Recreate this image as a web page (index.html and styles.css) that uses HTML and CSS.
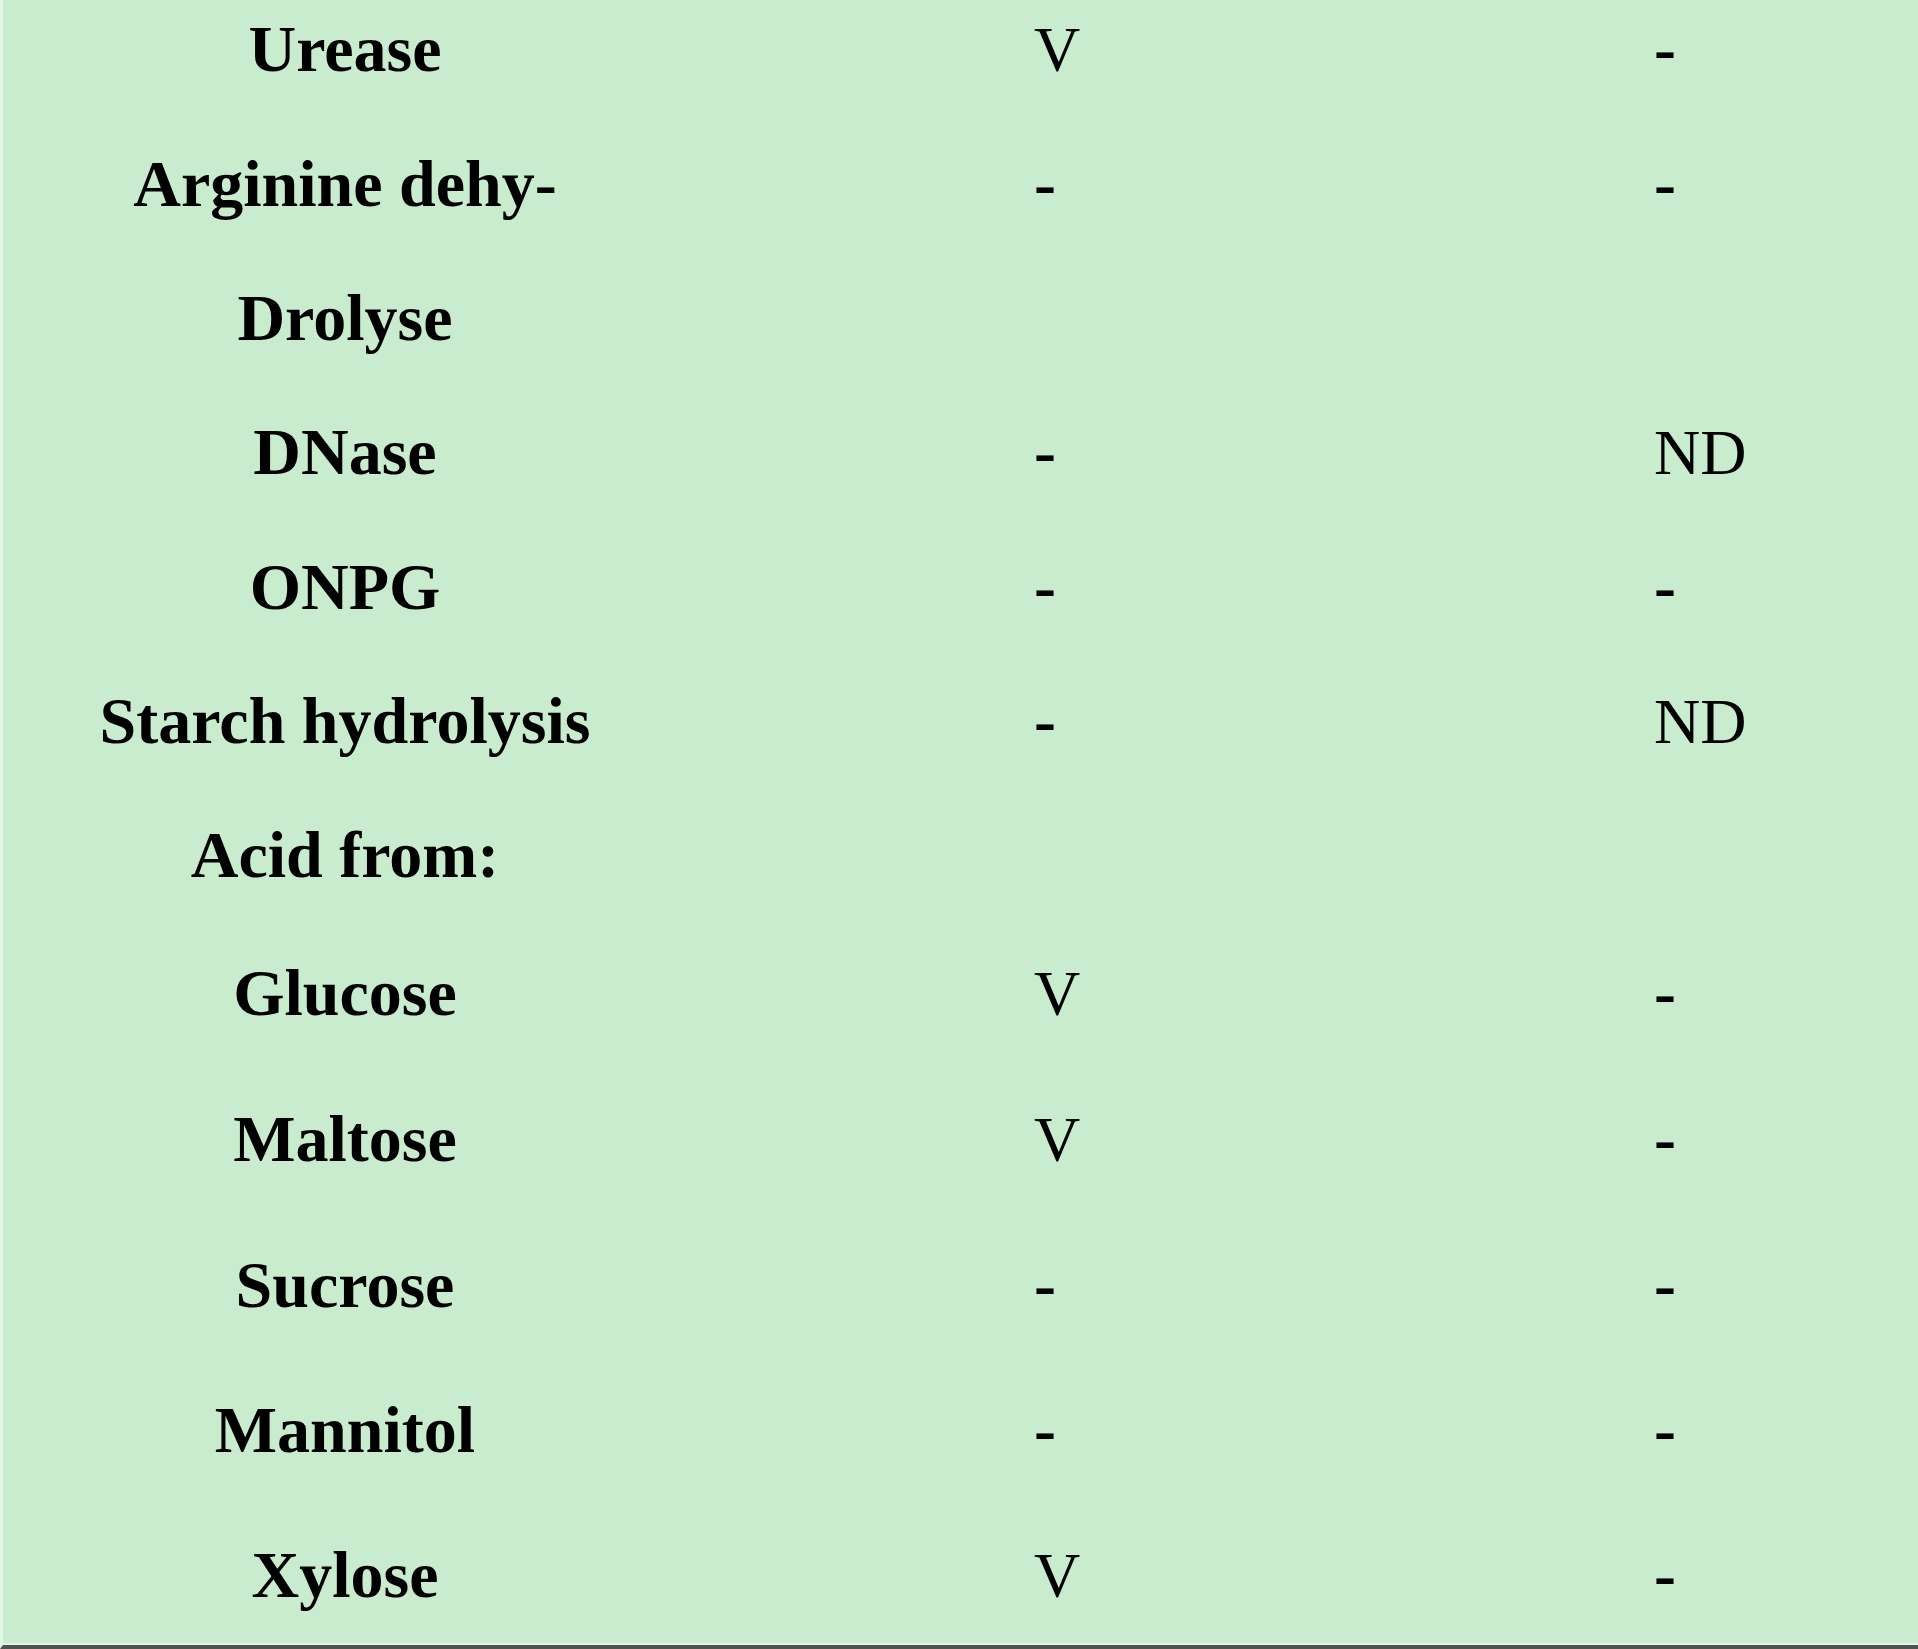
FILE: index.html
```html
<!DOCTYPE html>
<html lang="en">
<head>
<meta charset="utf-8">
<title>Biochemical characteristics</title>
<link rel="stylesheet" href="styles.css">
</head>
<body>
<div class="sheet">
  <div class="table">
    <div class="row tall-a"><div class="label">Urease</div><div class="val">V</div><div class="val dash">-</div></div>
    <div class="row tall-a"><div class="label">Arginine dehy-<br>Drolyse</div><div class="val dash">-</div><div class="val dash">-</div></div>
    <div class="row tall-a"><div class="label">DNase</div><div class="val dash">-</div><div class="val">ND</div></div>
    <div class="row tall-a"><div class="label">ONPG</div><div class="val dash">-</div><div class="val dash">-</div></div>
    <div class="row tall-a"><div class="label">Starch hydrolysis</div><div class="val dash">-</div><div class="val">ND</div></div>
    <div class="row tall-c"><div class="label">Acid from:</div><div class="val"></div><div class="val"></div></div>
    <div class="row tall-b"><div class="label">Glucose</div><div class="val">V</div><div class="val dash">-</div></div>
    <div class="row tall-b"><div class="label">Maltose</div><div class="val">V</div><div class="val dash">-</div></div>
    <div class="row tall-b"><div class="label">Sucrose</div><div class="val dash">-</div><div class="val dash">-</div></div>
    <div class="row tall-b"><div class="label">Mannitol</div><div class="val dash">-</div><div class="val dash">-</div></div>
    <div class="row tall-b"><div class="label">Xylose</div><div class="val">V</div><div class="val dash">-</div></div>
  </div>
</div>
</body>
</html>
```

FILE: styles.css
```css
html, body {
  margin: 0;
  padding: 0;
  background: #c8eccd;
}

body {
  width: 1918px;
  height: 1649px;
  overflow: hidden;
  font-family: "Liberation Serif", "Times New Roman", serif;
  color: #000;
}

.sheet {
  box-sizing: border-box;
  height: 1649px;
  border-left: 3px solid #e2f6e5;
  border-bottom: 4px solid #4f5451;
  box-shadow: inset 0 -2px 0 #e4f7e7;
  background: #c8eccd;
  overflow: hidden;
}

.table {
  display: grid;
  grid-template-columns: 684px 620px 1fr;
  align-items: baseline;
  margin-top: -18px;
}

.row {
  display: contents;
}

.tall-a {
  line-height: 134px;
}

.tall-c {
  line-height: 131px;
}

.tall-b {
  line-height: 145px;
}

.label {
  font-weight: bold;
  font-size: 66px;
  text-align: center;
}

.val {
  font-size: 64px;
  padding-left: 347px;
  white-space: nowrap;
}

.val.dash {
  font-weight: bold;
  font-size: 66px;
}
```
